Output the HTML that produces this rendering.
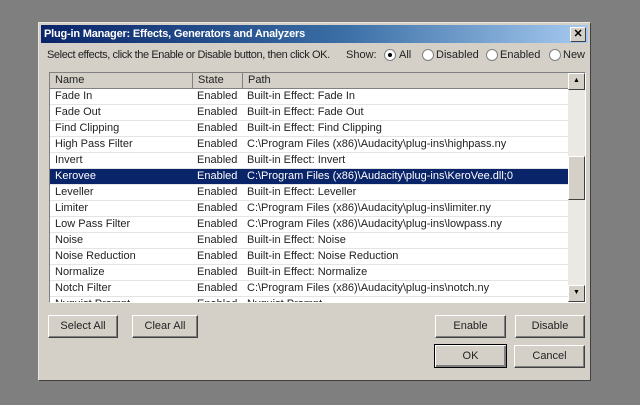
<!DOCTYPE html>
<html><head><style>
body{margin:0;width:640px;height:405px;background:#7f7f7f;position:relative;overflow:hidden;font-family:"Liberation Sans",sans-serif;font-size:11px;color:#222}
.dlg{position:absolute;left:38px;top:22px;width:553px;height:359px;background:#d4d0c8;border:1px solid #e8e6e0;border-right-color:#404040;border-bottom-color:#404040;box-sizing:border-box}
.title{position:absolute;left:2px;top:2px;right:2px;height:18px;background:linear-gradient(to right,#0a246a,#3a6ea5 55%,#a6caf0);color:#fff;font-weight:bold;font-size:11px;line-height:18px;padding-left:3px;letter-spacing:-0.2px}
.x{position:absolute;right:2px;top:2px;width:14px;height:13px;background:#d4d0c8;border:1px solid #fff;border-right-color:#404040;border-bottom-color:#404040;color:#000;font-size:11px;line-height:12px;text-align:center;font-weight:bold}
.abs{position:absolute;white-space:nowrap}
.radio{position:absolute;width:10px;height:10px;border-radius:50%;background:#fff;border:1px solid #808080;top:26px}
.radio.on:after{content:"";position:absolute;left:3px;top:3px;width:4px;height:4px;border-radius:50%;background:#000}
.list{position:absolute;left:10px;top:49px;width:537px;height:231px;background:#fff;border:1px solid #808080;border-right-color:#fff;border-bottom-color:#fff;overflow:hidden;box-sizing:border-box}
.hdr{position:absolute;top:0;height:16px;background:#d4d0c8;border-right:1px solid #808080;border-bottom:1px solid #808080;box-sizing:border-box;line-height:15px;padding-left:5px}
.row{position:absolute;left:0;width:519px;height:16px;line-height:15px;border-bottom:1px solid #e4e4e4;box-sizing:border-box}
.row span{position:absolute;top:0}
.sel{background:#0a246a;color:#fff}
.sb{position:absolute;right:0;top:0;width:17px;height:229px;background:#ebe9e4}
.sbb{position:absolute;left:0;width:15px;height:15px;background:#d4d0c8;border:1px solid #fff;border-right-color:#404040;border-bottom-color:#404040;font-size:7px;text-align:center;line-height:14px;color:#000}
.btn{position:absolute;background:#d4d0c8;border:1px solid #fff;border-right-color:#404040;border-bottom-color:#404040;box-sizing:border-box;text-align:center;box-shadow:inset -1px -1px #808080}
</style></head><body>
<div class="dlg">
<div class="title">Plug-in Manager: Effects, Generators and Analyzers<div class="x">✕</div></div>
<div class="abs" style="left:8px;top:26px;letter-spacing:-0.4px">Select effects, click the Enable or Disable button, then click OK.</div>
<div class="abs" style="left:307px;top:26px">Show:</div>
<span class="radio on" style="left:345px"></span><div class="abs" style="left:360px;top:26px">All</div>
<span class="radio" style="left:383px"></span><div class="abs" style="left:397px;top:26px">Disabled</div>
<span class="radio" style="left:447px"></span><div class="abs" style="left:461px;top:26px">Enabled</div>
<span class="radio" style="left:510px"></span><div class="abs" style="left:524px;top:26px">New</div>
<div class="list">
<div class="hdr" style="left:0;width:143px">Name</div>
<div class="hdr" style="left:143px;width:50px">State</div>
<div class="hdr" style="left:193px;width:327px">Path</div>
<div class="row" style="top:16px"><span style="left:5px">Fade In</span><span style="left:147px">Enabled</span><span style="left:197px">Built-in Effect: Fade In</span></div>
<div class="row" style="top:32px"><span style="left:5px">Fade Out</span><span style="left:147px">Enabled</span><span style="left:197px">Built-in Effect: Fade Out</span></div>
<div class="row" style="top:48px"><span style="left:5px">Find Clipping</span><span style="left:147px">Enabled</span><span style="left:197px">Built-in Effect: Find Clipping</span></div>
<div class="row" style="top:64px"><span style="left:5px">High Pass Filter</span><span style="left:147px">Enabled</span><span style="left:197px">C:\Program Files (x86)\Audacity\plug-ins\highpass.ny</span></div>
<div class="row" style="top:80px"><span style="left:5px">Invert</span><span style="left:147px">Enabled</span><span style="left:197px">Built-in Effect: Invert</span></div>
<div class="row sel" style="top:96px"><span style="left:5px">Kerovee</span><span style="left:147px">Enabled</span><span style="left:197px">C:\Program Files (x86)\Audacity\plug-ins\KeroVee.dll;0</span></div>
<div class="row" style="top:112px"><span style="left:5px">Leveller</span><span style="left:147px">Enabled</span><span style="left:197px">Built-in Effect: Leveller</span></div>
<div class="row" style="top:128px"><span style="left:5px">Limiter</span><span style="left:147px">Enabled</span><span style="left:197px">C:\Program Files (x86)\Audacity\plug-ins\limiter.ny</span></div>
<div class="row" style="top:144px"><span style="left:5px">Low Pass Filter</span><span style="left:147px">Enabled</span><span style="left:197px">C:\Program Files (x86)\Audacity\plug-ins\lowpass.ny</span></div>
<div class="row" style="top:160px"><span style="left:5px">Noise</span><span style="left:147px">Enabled</span><span style="left:197px">Built-in Effect: Noise</span></div>
<div class="row" style="top:176px"><span style="left:5px">Noise Reduction</span><span style="left:147px">Enabled</span><span style="left:197px">Built-in Effect: Noise Reduction</span></div>
<div class="row" style="top:192px"><span style="left:5px">Normalize</span><span style="left:147px">Enabled</span><span style="left:197px">Built-in Effect: Normalize</span></div>
<div class="row" style="top:208px"><span style="left:5px">Notch Filter</span><span style="left:147px">Enabled</span><span style="left:197px">C:\Program Files (x86)\Audacity\plug-ins\notch.ny</span></div>
<div class="row" style="top:224px"><span style="left:5px">Nyquist Prompt</span><span style="left:147px">Enabled</span><span style="left:197px">Nyquist Prompt</span></div>
<div class="sb">
<div class="sbb" style="top:0">▲</div>
<div class="sbb" style="top:83px;height:42px"></div>
<div class="sbb" style="top:212px">▼</div>
</div>
</div>
<div class="btn" style="left:9px;top:292px;width:70px;height:23px;line-height:21px">Select All</div>
<div class="btn" style="left:93px;top:292px;width:66px;height:23px;line-height:21px">Clear All</div>
<div class="btn" style="left:396px;top:292px;width:71px;height:23px;line-height:21px">Enable</div>
<div class="btn" style="left:476px;top:292px;width:70px;height:23px;line-height:21px">Disable</div>
<div class="btn" style="left:395px;top:321px;width:73px;height:24px;line-height:22px;border:1px solid #000;box-shadow:inset 1px 1px #fff,inset -2px -2px #808080">OK</div>
<div class="btn" style="left:475px;top:322px;width:71px;height:23px;line-height:21px">Cancel</div>
</div>
</body></html>
